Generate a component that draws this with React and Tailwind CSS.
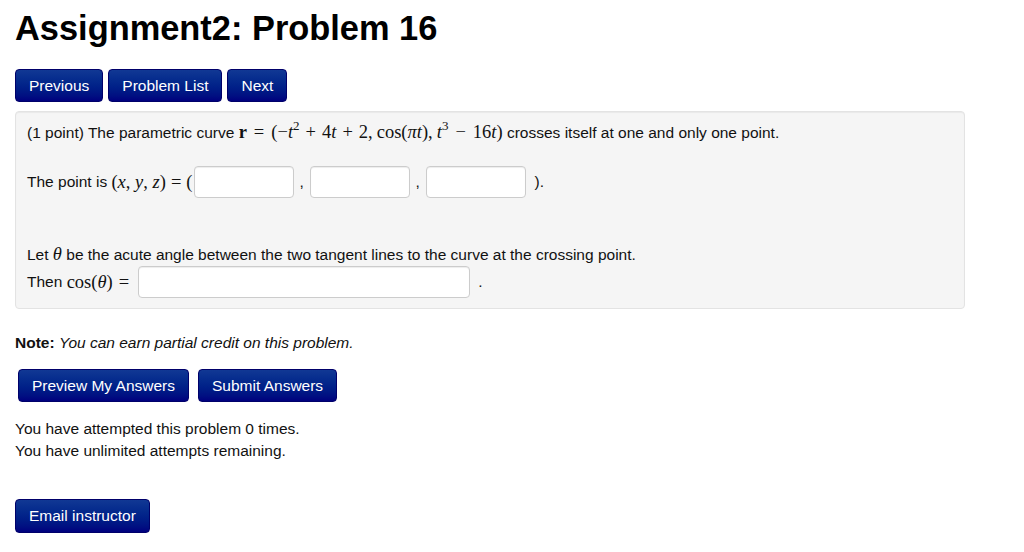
import React from "react";

function Btn({ children, className = "" }) {
  return (
    <button
      className={
        "h-[33px] px-[13px] rounded-[4px] border border-[#00006a] bg-linear-to-b from-[#113894] to-[#00007e] text-white text-[15.5px] leading-none whitespace-nowrap " +
        className
      }
    >
      {children}
    </button>
  );
}

function Input({ className = "" }) {
  return (
    <span
      className={
        "inline-block h-[32px] bg-white border border-[#cccccc] rounded-[4px] shadow-[inset_0_1px_1px_rgba(0,0,0,0.075)] " +
        className
      }
    />
  );
}

const serif = "font-['Liberation_Serif','Times_New_Roman',serif] text-[18.5px] leading-none";

export default function App() {
  return (
    <div className="min-h-[552px] bg-white px-[15px] font-['Liberation_Sans',Arial,sans-serif] text-[15.5px] text-[#111]">
      <h1 className="pt-[11px] text-[34.4px] leading-[34px] font-bold text-black">
        Assignment2: Problem 16
      </h1>

      <div className="mt-[24px] flex gap-[5px]">
        <Btn>Previous</Btn>
        <Btn>Problem List</Btn>
        <Btn>Next</Btn>
      </div>

      <div className="mt-[9px] w-[950px] border border-[#e3e3e3] bg-[#f5f5f5] rounded-[4px] shadow-[inset_0_1px_1px_rgba(0,0,0,0.05)] pl-[11px] pt-[10px] pb-[10px]">
        <div className="h-[22px] leading-[22px] whitespace-nowrap">
          (1 point) The parametric curve{" "}
          <span className={serif}>
            <b>r</b>
            <span className="mx-[7px]">=</span>(−<i>t</i>
            <sup className="text-[13px] leading-none -top-[0.65em]">2</sup>
            <span className="mx-[6px]">+</span>4<i>t</i>
            <span className="mx-[6px]">+</span>2,
            <span className="ml-[4px]">cos(</span>
            <i>πt</i>),<span className="ml-[4px]"></span>
            <i>t</i>
            <sup className="text-[13px] leading-none -top-[0.65em]">3</sup>
            <span className="mx-[7px]">−</span>16<i>t</i>)
          </span>{" "}
          crosses itself at one and only one point.
        </div>

        <div className="mt-[22px] flex items-center h-[32px] whitespace-pre">
          <span>The point is </span>
          <span className={serif}>
            (<i>x</i>, <i>y</i>, <i>z</i>)<span className="mx-[5px]">=</span>(
          </span>
          <Input className="ml-[1px] w-[100px]" />
          <span className="w-[16px] text-center">,</span>
          <Input className="w-[100px]" />
          <span className="w-[16px] text-center">,</span>
          <Input className="w-[100px]" />
          <span className="ml-[9px]">).</span>
        </div>

        <div className="mt-[46px] h-[22px] leading-[22px] whitespace-nowrap">
          Let <i className={serif}>θ</i> be the acute angle between the two tangent lines to the curve at the crossing point.
        </div>
        <div className="flex items-center h-[32px] whitespace-pre">
          <span>Then </span>
          <span className={serif}>
            cos(<i>θ</i>)<span className="mx-[6px]">=</span>
          </span>
          <Input className="ml-[3px] w-[332px]" />
          <span className="ml-[8px]">.</span>
        </div>
      </div>

      <div className="mt-[23px] leading-[22px]">
        <b>Note:</b> <i>You can earn partial credit on this problem.</i>
      </div>

      <div className="mt-[15px] ml-[3px] flex gap-[9px]">
        <Btn>Preview My Answers</Btn>
        <Btn>Submit Answers</Btn>
      </div>

      <div className="mt-[16px] leading-[22px]">
        <div>You have attempted this problem 0 times.</div>
        <div>You have unlimited attempts remaining.</div>
      </div>

      <div className="mt-[37px]">
        <Btn className="h-[34px]">Email instructor</Btn>
      </div>
    </div>
  );
}
